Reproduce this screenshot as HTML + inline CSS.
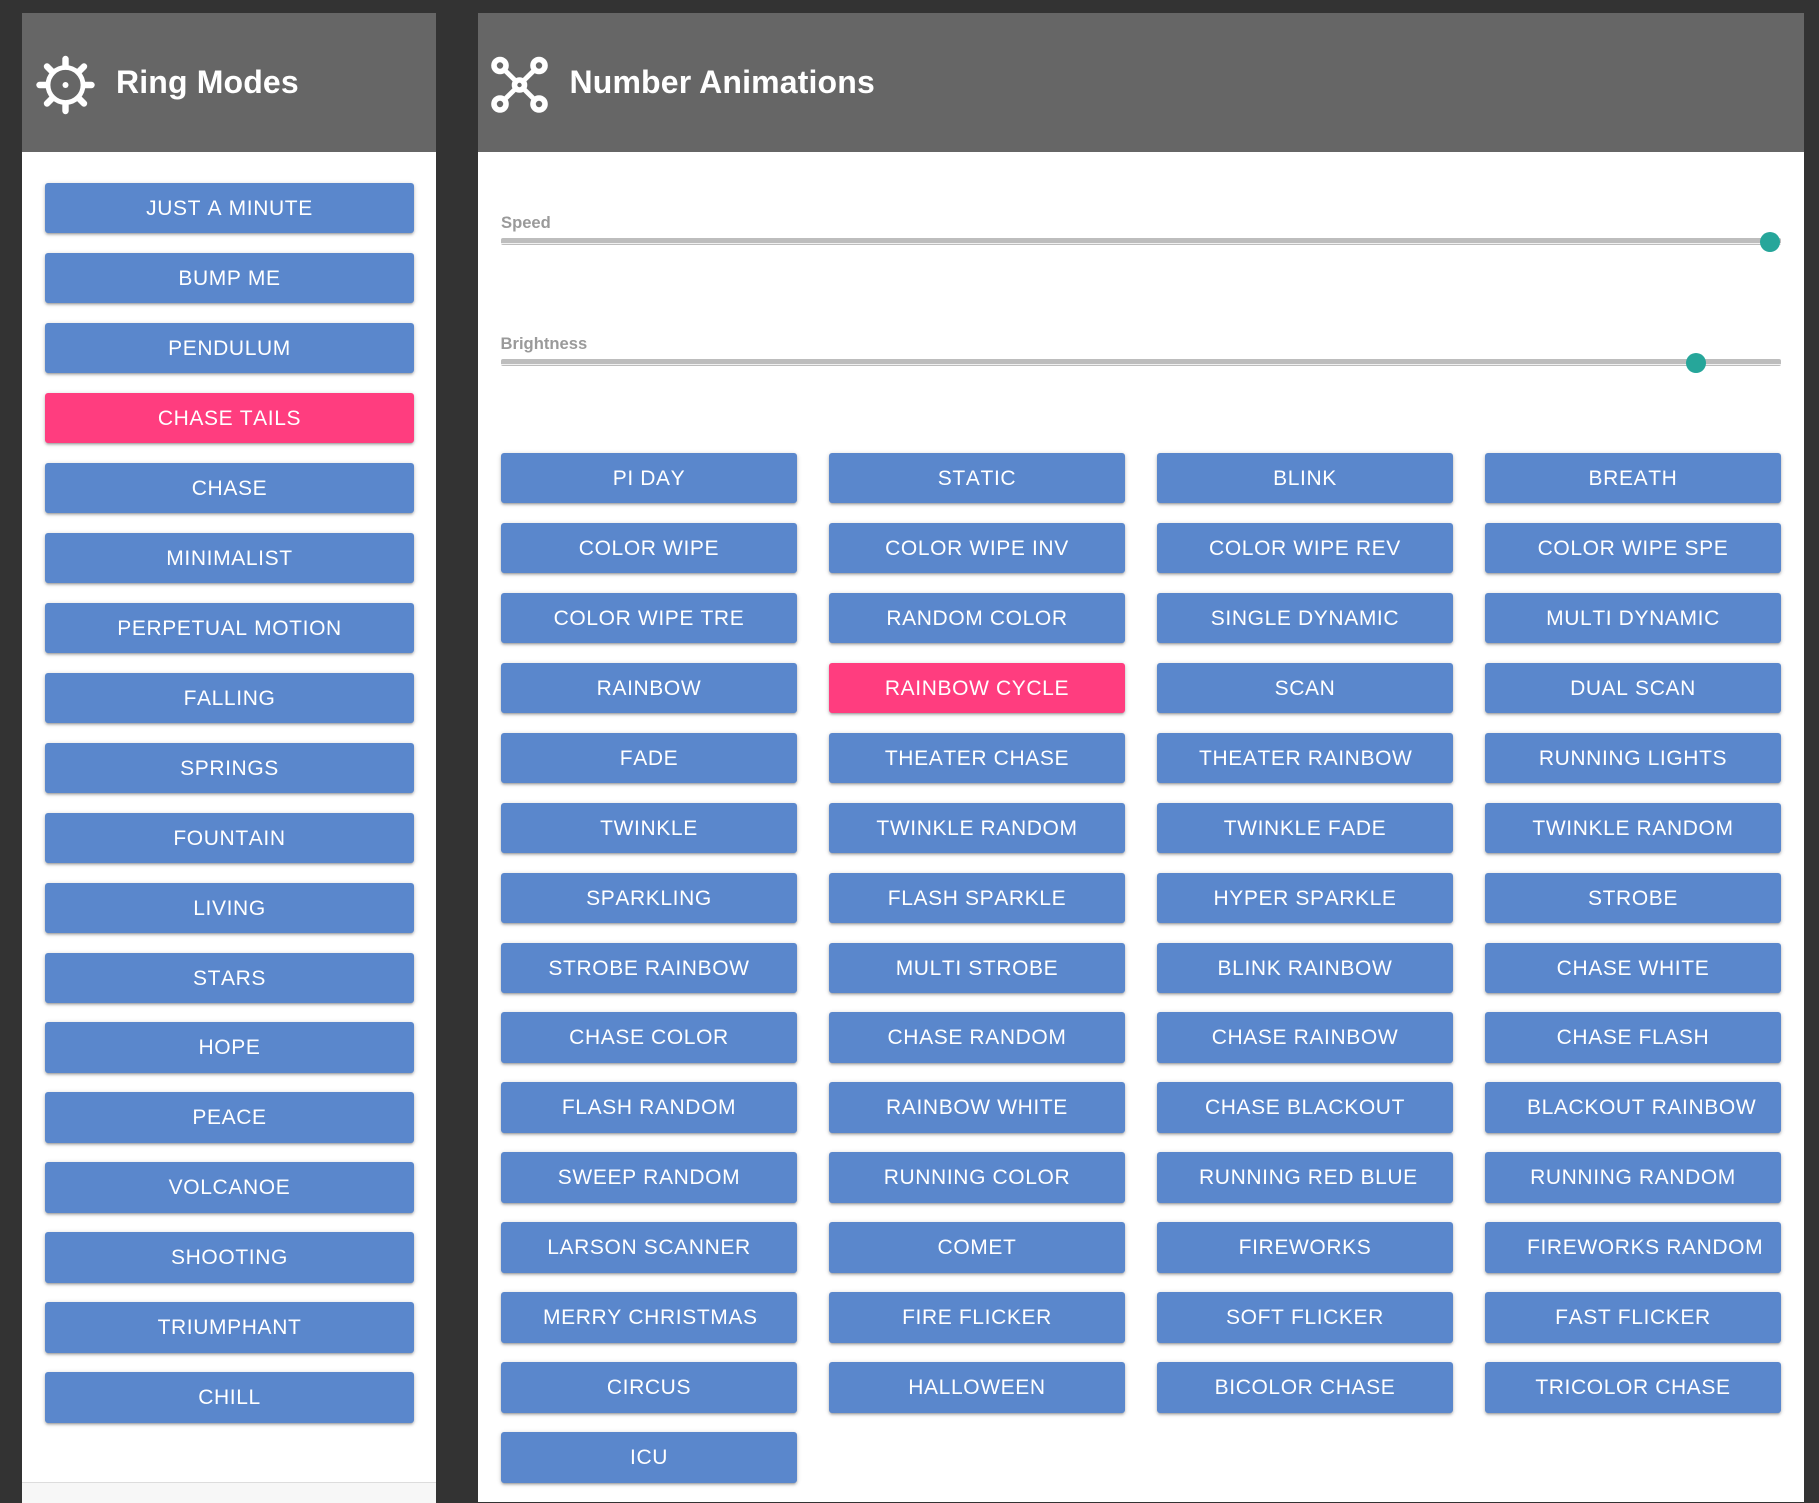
<!DOCTYPE html>
<html><head><meta charset="utf-8"><title>Ring Modes</title>
<style>
html,body{margin:0;padding:0;width:1819px;height:1502px;overflow:hidden;background:#333;font-family:"Liberation Sans",Arial,sans-serif}
.card{position:absolute;top:13px;height:1489px;background:#fff}
.hd{position:absolute;left:0;top:0;right:0;height:139px;background:#666}
.hd h2{position:absolute;top:50px;margin:0;font-size:32px;line-height:38px;font-weight:700;color:#fff;white-space:nowrap;letter-spacing:.15px}
.hd svg{position:absolute;top:42px}
.r{position:absolute;display:flex;gap:32px}
.b{box-sizing:border-box;flex:none;height:50px;line-height:51px;padding:0 42px;background:#5a87cc;color:#fff;border-radius:3px;font-size:21px;letter-spacing:.62px;font-kerning:none;text-align:center;white-space:nowrap;box-shadow:0 2px 2px 0 rgba(0,0,0,.14),0 3px 1px -2px rgba(0,0,0,.12),0 1px 5px 0 rgba(0,0,0,.2)}
.s .b{height:51px}
.rr .b{width:296px}.rl .b{width:369px}
.a{background:#ff3d7f}
.lab{position:absolute;left:501px;font-size:16.6px;line-height:20px;font-weight:700;color:#9a9a9a}
.tr{position:absolute;left:501px;width:1280px;height:7px;background:#bdbdbd;border-radius:2px}
.tr i{position:absolute;left:0;right:0;top:5px;height:1px;background:#f0f0f0}
.kn{position:absolute;width:20px;height:20px;border-radius:50%;background:#26a69a}
.ft{position:absolute;left:0;right:0;top:1469px;height:20px;background:#f7f7f7;border-top:1px solid #ddd}
</style></head><body>
<div class="card" style="left:22px;width:414px">
<div class="hd"><svg style="left:14px" width="60" height="60" viewBox="0 0 60 60" fill="none" stroke="#fff" stroke-linecap="round"><circle cx="29.500" cy="30" r="17.500" stroke-width="4.800"/><circle cx="29.500" cy="30" r="3" fill="#fff" stroke="none"/><path stroke-width="6.400" d="M29.500 11V4M29.500 49v7M10.500 30h-7M48.500 30h7M16 16.500l-5-5M43 43.500l5 5M43 16.500l5-5M16 43.500l-5 5"/></svg><h2 style="left:94px">Ring Modes</h2></div>
<div class="ft"></div>
</div>
<div class="card" style="left:478px;width:1326px">
<div class="hd"><svg style="left:12px" width="60" height="60" viewBox="0 0 60 60" fill="none" stroke="#fff"><path stroke-width="4.800" stroke-linecap="round" d="M10 10.500L49 49M49 10.500L10 49"/><g fill="#666" stroke-width="5.600"><circle cx="10" cy="10.500" r="6"/><circle cx="49" cy="10.500" r="6"/><circle cx="10" cy="49" r="6"/><circle cx="49" cy="49" r="6"/><circle cx="29.500" cy="30" r="5"/></g></svg><h2 style="left:91.500px">Number Animations</h2></div>
</div>
<div class="lab" style="top:213px">Speed</div>
<div class="tr" style="top:238px"><i></i></div>
<div class="kn" style="left:1760px;top:232px"></div>
<div class="lab" style="top:334px;left:500.500px">Brightness</div>
<div class="tr" style="top:359px"><i></i></div>
<div class="kn" style="left:1686px;top:353px"></div>

<div class="r rl" style="left:45px;top:183px"><div class="b">JUST A MINUTE</div></div>
<div class="r rl" style="left:45px;top:253px"><div class="b">BUMP ME</div></div>
<div class="r rl" style="left:45px;top:323px"><div class="b">PENDULUM</div></div>
<div class="r rl" style="left:45px;top:393px"><div class="b a">CHASE TAILS</div></div>
<div class="r rl" style="left:45px;top:463px"><div class="b">CHASE</div></div>
<div class="r rl" style="left:45px;top:533px"><div class="b">MINIMALIST</div></div>
<div class="r rl" style="left:45px;top:603px"><div class="b">PERPETUAL MOTION</div></div>
<div class="r rl" style="left:45px;top:673px"><div class="b">FALLING</div></div>
<div class="r rl" style="left:45px;top:743px"><div class="b">SPRINGS</div></div>
<div class="r rl" style="left:45px;top:813px"><div class="b">FOUNTAIN</div></div>
<div class="r rl" style="left:45px;top:883px"><div class="b">LIVING</div></div>
<div class="r rl" style="left:45px;top:953px"><div class="b">STARS</div></div>
<div class="r rl s" style="left:45px;top:1022px"><div class="b">HOPE</div></div>
<div class="r rl s" style="left:45px;top:1092px"><div class="b">PEACE</div></div>
<div class="r rl s" style="left:45px;top:1162px"><div class="b">VOLCANOE</div></div>
<div class="r rl s" style="left:45px;top:1232px"><div class="b">SHOOTING</div></div>
<div class="r rl s" style="left:45px;top:1302px"><div class="b">TRIUMPHANT</div></div>
<div class="r rl s" style="left:45px;top:1372px"><div class="b">CHILL</div></div>

<div class="r rr" style="left:501px;top:453px"><div class="b">PI DAY</div><div class="b">STATIC</div><div class="b">BLINK</div><div class="b">BREATH</div></div>
<div class="r rr" style="left:501px;top:523px"><div class="b">COLOR WIPE</div><div class="b">COLOR WIPE INV</div><div class="b">COLOR WIPE REV</div><div class="b">COLOR WIPE SPE</div></div>
<div class="r rr" style="left:501px;top:593px"><div class="b">COLOR WIPE TRE</div><div class="b">RANDOM COLOR</div><div class="b">SINGLE DYNAMIC</div><div class="b">MULTI DYNAMIC</div></div>
<div class="r rr" style="left:501px;top:663px"><div class="b">RAINBOW</div><div class="b a">RAINBOW CYCLE</div><div class="b">SCAN</div><div class="b">DUAL SCAN</div></div>
<div class="r rr" style="left:501px;top:733px"><div class="b">FADE</div><div class="b">THEATER CHASE</div><div class="b">THEATER RAINBOW</div><div class="b">RUNNING LIGHTS</div></div>
<div class="r rr" style="left:501px;top:803px"><div class="b">TWINKLE</div><div class="b">TWINKLE RANDOM</div><div class="b">TWINKLE FADE</div><div class="b">TWINKLE RANDOM</div></div>
<div class="r rr" style="left:501px;top:873px"><div class="b">SPARKLING</div><div class="b">FLASH SPARKLE</div><div class="b">HYPER SPARKLE</div><div class="b">STROBE</div></div>
<div class="r rr" style="left:501px;top:943px"><div class="b">STROBE RAINBOW</div><div class="b">MULTI STROBE</div><div class="b">BLINK RAINBOW</div><div class="b">CHASE WHITE</div></div>
<div class="r rr s" style="left:501px;top:1012px"><div class="b">CHASE COLOR</div><div class="b">CHASE RANDOM</div><div class="b">CHASE RAINBOW</div><div class="b">CHASE FLASH</div></div>
<div class="r rr s" style="left:501px;top:1082px"><div class="b">FLASH RANDOM</div><div class="b">RAINBOW WHITE</div><div class="b">CHASE BLACKOUT</div><div class="b">BLACKOUT RAINBOW</div></div>
<div class="r rr s" style="left:501px;top:1152px"><div class="b">SWEEP RANDOM</div><div class="b">RUNNING COLOR</div><div class="b">RUNNING RED BLUE</div><div class="b">RUNNING RANDOM</div></div>
<div class="r rr s" style="left:501px;top:1222px"><div class="b">LARSON SCANNER</div><div class="b">COMET</div><div class="b">FIREWORKS</div><div class="b">FIREWORKS RANDOM</div></div>
<div class="r rr s" style="left:501px;top:1292px"><div class="b">MERRY CHRISTMAS</div><div class="b">FIRE FLICKER</div><div class="b">SOFT FLICKER</div><div class="b">FAST FLICKER</div></div>
<div class="r rr s" style="left:501px;top:1362px"><div class="b">CIRCUS</div><div class="b">HALLOWEEN</div><div class="b">BICOLOR CHASE</div><div class="b">TRICOLOR CHASE</div></div>
<div class="r rr s" style="left:501px;top:1432px"><div class="b">ICU</div></div>
</body></html>
